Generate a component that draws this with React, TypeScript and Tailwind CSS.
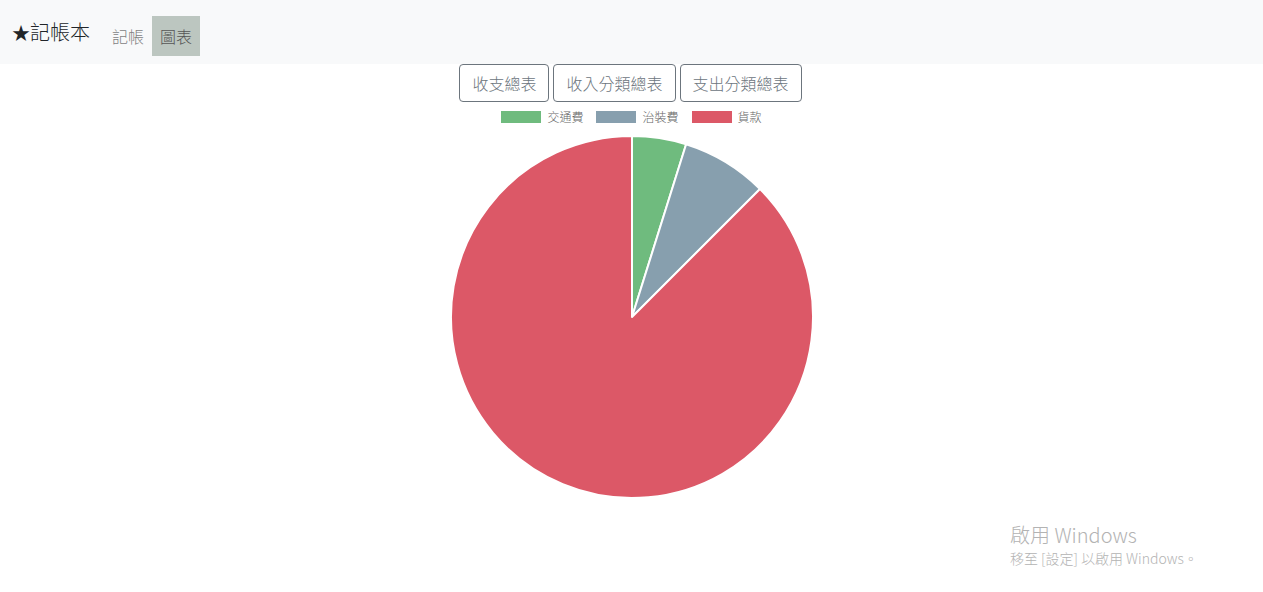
import React from 'react';

const font = { fontFamily: '"Noto Sans CJK TC", "Noto Sans", sans-serif' };

const slices = [
  { label: '交通費', color: '#6fbb7e', value: 17.4 },
  { label: '治裝費', color: '#879fae', value: 27.6 },
  { label: '貨款', color: '#dc5867', value: 315 },
];

function Pie() {
  const r = 181;
  const c = 183;
  let start = 0;
  const pt = (deg: number) => {
    const a = (deg * Math.PI) / 180;
    return [c + r * Math.sin(a), c - r * Math.cos(a)];
  };
  return (
    <svg width={366} height={366} viewBox="0 0 366 366">
      {slices.map((s) => {
        const end = start + s.value;
        const [x1, y1] = pt(start);
        const [x2, y2] = pt(end);
        const large = s.value > 180 ? 1 : 0;
        const d = `M${c} ${c} L${x1} ${y1} A${r} ${r} 0 ${large} 1 ${x2} ${y2} Z`;
        start = end;
        return <path key={s.label} d={d} fill={s.color} stroke="#fff" strokeWidth={2} strokeLinejoin="round" />;
      })}
    </svg>
  );
}

export default function App() {
  return (
    <div className="relative min-h-[592px] bg-white" style={font}>
      {/* Navbar */}
      <nav className="h-16 bg-[#f8f9fa] flex items-center px-3">
        <span className="text-[20px] font-light text-[#212529] mr-[14px] flex items-center">
          <span className="text-[18px]">★</span>記帳本
        </span>
        <a className="mt-2 px-2 h-10 flex items-center text-[16px] font-light text-[#7f7f7f]">記帳</a>
        <a className="mt-2 px-2 h-10 flex items-center text-[16px] font-light text-[#555] bg-[#bcc6c0]">圖表</a>
      </nav>

      {/* Buttons */}
      <div className="flex justify-center gap-1 pr-[2px]">
        <button className="h-[38px] px-3 border border-[#6c757d] rounded text-[16px] font-light text-[#6c757d]">收支總表</button>
        <button className="h-[38px] px-3 border border-[#6c757d] rounded text-[16px] font-light text-[#6c757d]">收入分類總表</button>
        <button className="h-[38px] px-3 border border-[#6c757d] rounded text-[16px] font-light text-[#6c757d]">支出分類總表</button>
      </div>

      {/* Chart */}
      <div className="flex flex-col items-center">
        <div className="flex items-center gap-[13px] mt-[9px] h-[12px]">
          {slices.map((s) => (
            <div key={s.label} className="flex items-center gap-[6px]">
              <span className="w-10 h-3" style={{ background: s.color }} />
              <span className="text-[12px] font-light text-[#666] leading-none">{s.label}</span>
            </div>
          ))}
        </div>
        <div className="mt-[11px]">
          <Pie />
        </div>
      </div>

      {/* Windows watermark */}
      <div className="absolute left-[1010px] top-[522px] text-[#b3b3b3] font-light">
        <div className="text-[20px] leading-[26px]">啟用 Windows</div>
        <div className="text-[14px] leading-[20px]">移至 [設定] 以啟用 Windows。</div>
      </div>
    </div>
  );
}
